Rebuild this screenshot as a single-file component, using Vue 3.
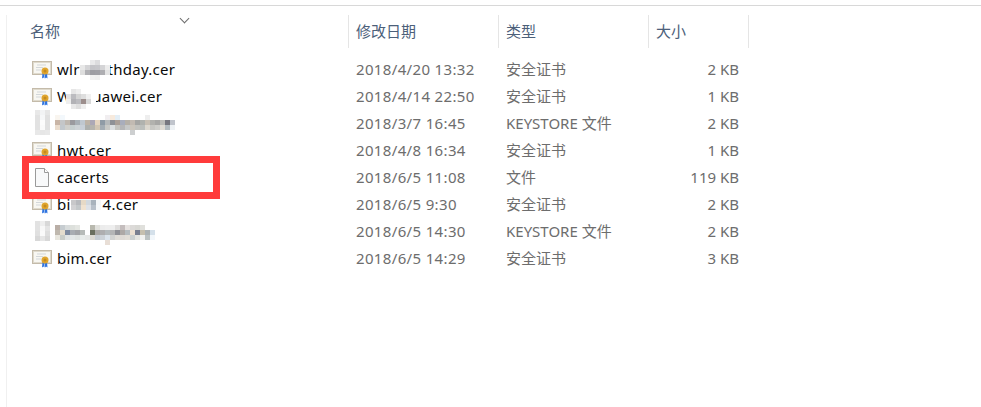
<template>
  <div class="explorer">
    <div class="list">
      <div class="list-head">
        <div class="head-cell name-col">名称<i class="sort-arrow"></i></div>
        <div class="head-cell date-col">修改日期</div>
        <div class="head-cell type-col">类型</div>
        <div class="head-cell size-col">大小</div>
      </div>

      <div v-for="file in files" :key="file.date" class="file-row">
        <div class="file-name">
          <svg v-if="file.icon === 'cert'" class="icon" width="20" height="18" viewBox="0 0 20 18">
            <rect x="0.5" y="0.5" width="19" height="13" fill="#f8f7f2" stroke="#c4bbaa" />
            <rect x="1.5" y="1.5" width="17" height="11" fill="none" stroke="#dfdacd" />
            <path d="M5 4h9M4 6.500h7M4 9h5" stroke="#d3d7da" stroke-width="1" />
            <path d="M10.500 12l-.5 5.500 1.500-1 1 1V12zM13 12v5.500l1-1 1.500 1-.5-5.500z" fill="#2f74e0" />
            <circle cx="13" cy="10" r="3.500" fill="#dfa52e" />
            <circle cx="13" cy="10" r="1.500" fill="#c48a1e" />
          </svg>
          <svg v-else-if="file.icon === 'file'" class="icon" width="20" height="19" viewBox="0 0 20 19">
            <path d="M3.500.5h9l4 4v14h-13z" fill="#f8f9fa" stroke="#9a9a9a" />
            <path d="M12.500.5v4h4" fill="#fff" stroke="#9a9a9a" />
          </svg>
          <svg v-else class="icon mosaic-icon" :width="15" :height="file.icon.length * 5" :viewBox="`0 0 15 ${file.icon.length * 5}`">
            <template v-for="(line, y) in file.icon" :key="y">
              <rect v-for="(c, x) in line" :key="x" :x="x * 5" :y="y * 5" width="5" height="5" :fill="c" />
            </template>
          </svg>

          <template v-for="(part, i) in file.name" :key="i">
            <span v-if="typeof part === 'string'">{{ part }}</span>
            <svg v-else class="mosaic" :class="part.cls" :width="part.rows[0].length * 5" :height="part.rows.length * 5">
              <template v-for="(line, y) in part.rows" :key="y">
                <rect v-for="(c, x) in line" :key="x" :x="x * 5" :y="y * 5" width="5" height="5" :fill="c" />
              </template>
            </svg>
          </template>
        </div>
        <div class="file-date">{{ file.date }}</div>
        <div class="file-type">{{ file.type }}</div>
        <div class="file-size">{{ file.size }}</div>
      </div>
    </div>

    <div class="red-mark"></div>
  </div>
</template>

<script setup>
const w = '#ffffff'

const keyIcon1 = [
  ['#e8e8e8', '#f2f3f4', '#e6e6e6'],
  ['#e2e2e2', '#f6f7f8', '#e0e0e0'],
  ['#e2e2e2', '#fcfcfc', '#e0e0e0'],
  ['#e2e2e2', '#fafafa', '#e0e0e0'],
  ['#e8e8e8', '#e6e6e6', '#e8e8e8']
]
const keyIcon2 = [
  ['#e2e2e2', '#eeeeee', '#d8d8d8'],
  ['#e2e2e2', '#f8f8f8', '#e4e4e4'],
  ['#e0e0e0', '#fafafa', '#dedede'],
  ['#d8d8d8', '#e6e6e6', '#d8d8d8']
]

const keyName1 = [
  ['#f9f5ef', '#f3f8fc', w, w, w, w, w, w, w, w, '#f1eef0', '#f7eadd', '#e3eef6', w, w, w, w, w, '#eeeeee', w, w, w, w, w],
  ['#c9b5a6', '#c4c6c8', '#bfb8b0', '#9a9a9e', '#a8b0b6', '#bfc7d0', '#bdb3a8', '#aca8b6', '#e6d5c0', '#8f9ba6', '#b5b9bb', '#8f9096', '#ab9f98', '#a8adbc', '#b5b0a8', '#c2bab2', '#a6a6a4', '#b0b2ae', '#c8c0b4', '#b2b2ae', '#a8a8a6', '#bcbcb8', '#77777f', '#c0c4cc'],
  ['#eadccd', '#c2c8cd', '#d0d0cc', '#c6cfcf', '#cdd3d6', '#c8cfd8', '#aeb0ae', '#b6b4ae', '#d2c6b4', '#a4adb4', '#c8c9c6', '#dcdee0', '#c6c4c0', '#b5b6b8', '#c6c8c8', '#cbc5bc', '#c2c2be', '#bcbfbc', '#dcd8cf', '#c8c8c4', '#cfcfcb', '#e0dcd4', '#b4bcc0', '#eef2f5'],
  [w, w, w, w, w, w, w, w, w, w, w, w, w, w, w, '#cdcfd0', w, w, w, w, w, w, w, w]
]
const keyName2 = [
  ['#b9aea6', '#c6ccd0', '#d8dcdc', '#dde0dc', '#e4e6e2', w, w, '#b8b8ae', '#e0e0dc', '#ececec', '#eeeeee', '#eeeeee', '#dedddc', '#c4bdbd', '#e6e2e0', '#dcdad8', '#d8d8d4', '#e0e0dc', w, w],
  ['#bfb8ae', '#e3dccd', '#7e8ba0', '#a9adb2', '#a3a5a8', '#b7bbb8', w, '#6a6e5e', '#aaa8a5', '#aeaeb0', '#b4babd', '#b4b4b6', '#8f8f96', '#ada8a6', '#b6bcc0', '#ece0d2', '#7a7f90', '#c6bfae', '#acb2b4', '#d4e0ea'],
  ['#e8e6de', '#c9cdc8', '#dfe3e3', '#e4e8e8', '#e0e4e2', '#e8ecea', '#e6e8e6', '#dcd9d2', '#c6ccd2', '#ccd2d8', '#dce4ec', '#d2d2d2', '#e0dcd8', '#dedad6', '#e2ded8', '#ccd0d0', '#e4e4e0', '#f2f2f0', '#bcc2c2', '#f2f7fb'],
  [w, w, w, w, w, w, w, w, w, w, '#e8ded6', w, w, w, w, w, w, w, w, w]
]

const wlMosaic = [
  [w, w, '#e9e9ea', '#dcdcde', w, w],
  ['#e8e8e8', '#d4d4d6', '#c4c4c8', '#c6c6ca', '#d4d4d6', '#ececec'],
  ['#dedede', '#b0b0b4', '#9c9ca2', '#9e9ea4', '#aeaeb2', '#e4e4e4'],
  [w, w, '#f0f0f0', '#eeeeee', w, w]
]
const weMosaic = [
  [w, '#e6e6e6', '#eeeeee', w, w, w],
  ['#e2e2e2', '#bcbcc0', '#d4d4d4', '#dedede', '#f0f0f0', w],
  ['#eeeeee', '#b2b2b6', '#bcbcc0', '#9c8e8c', '#d8d8d8', w],
  [w, '#e8e8e8', '#dedede', '#eeeeee', w, w]
]
const biMosaic = [
  ['#c8c8ca', '#b8babe', '#e6d9c6', '#d2d8de', '#a8b2bc', '#f4f6f8'],
  ['#d2d2d4', '#c4c8ca', '#f0e2d0', '#dee2e8', '#b8c0ca', '#f6f8fa']
]

const files = [
  { icon: 'cert', name: ['wlr', { rows: wlMosaic, cls: 'mask-wl' }, 'thday.cer'], date: '2018/4/20 13:32', type: '安全证书', size: '2 KB' },
  { icon: 'cert', name: ['W', { rows: weMosaic, cls: 'mask-we' }, 'uawei.cer'], date: '2018/4/14 22:50', type: '安全证书', size: '1 KB' },
  { icon: keyIcon1, name: [{ rows: keyName1, cls: 'key-one' }], date: '2018/3/7 16:45', type: 'KEYSTORE 文件', size: '2 KB' },
  { icon: 'cert', name: ['hwt.cer'], date: '2018/4/8 16:34', type: '安全证书', size: '1 KB' },
  { icon: 'file', name: ['cacerts'], date: '2018/6/5 11:08', type: '文件', size: '119 KB' },
  { icon: 'cert', name: ['bi', { rows: biMosaic, cls: 'mask-bi' }, '4.cer'], date: '2018/6/5 9:30', type: '安全证书', size: '2 KB' },
  { icon: keyIcon2, name: [{ rows: keyName2, cls: 'key-two' }], date: '2018/6/5 14:30', type: 'KEYSTORE 文件', size: '2 KB' },
  { icon: 'cert', name: ['bim.cer'], date: '2018/6/5 14:29', type: '安全证书', size: '3 KB' }
]
</script>

<style>
html,
body {
  margin: 0;
  background: #fff;
}
</style>

<style scoped>
.explorer {
  position: relative;
  width: 981px;
  height: 407px;
  overflow: hidden;
  box-sizing: border-box;
  padding-top: 15px;
  background: #fff;
  font-family: "Noto Sans", "Noto Sans CJK SC", sans-serif;
  font-size: 15px;
}

/* window edge along the top */
.explorer::before {
  content: "";
  position: absolute;
  left: 0;
  right: 0;
  top: 5px;
  height: 1px;
  background: #d8d8d8;
}

.list {
  margin-left: 6px;
  height: 100%;
  border-left: 1px solid #f0f0f0;
}

.list-head,
.file-row {
  display: grid;
  grid-template-columns: 342px 150px 150px 100px;
  width: 742px;
}

.list-head {
  height: 33px;
  margin-bottom: 8px;
}

.head-cell {
  position: relative;
  box-sizing: border-box;
  padding-left: 7px;
  border-right: 1px solid #e5e5e5;
  line-height: 32px;
  color: #4c607a;
}

.head-cell.name-col {
  padding-left: 23px;
}

.sort-arrow {
  position: absolute;
  left: 174px;
  top: 0;
  width: 6px;
  height: 6px;
  border-right: 1px solid #6d6d6d;
  border-bottom: 1px solid #6d6d6d;
  transform: rotate(45deg);
}

.file-row {
  height: 27px;
  line-height: 27px;
  color: #6d6d6d;
}

.file-name {
  display: flex;
  align-items: center;
  padding-left: 25px;
  color: #0a0a0a;
  letter-spacing: 0.25px;
  white-space: pre;
}

.icon {
  flex: none;
  margin-right: 5px;
}

.mosaic-icon {
  margin: -2px 5px 0 3px;
}

.mosaic {
  flex: none;
  position: relative;
  z-index: 1;
}

.mask-wl {
  margin: 1px -2px 0 0;
}

.mask-we {
  margin: 5px -4px 0 -5px;
}

.mask-bi {
  margin: 1px 2px 0 0;
}

.key-one {
  margin-top: 3px;
}

.key-two {
  margin-top: 7px;
}

.file-date,
.file-type {
  padding-left: 7px;
}

.file-date {
  letter-spacing: 0.35px;
}

.file-size {
  padding-right: 10px;
  text-align: right;
}

.red-mark {
  position: absolute;
  left: 22px;
  top: 156px;
  width: 198px;
  height: 43px;
  box-sizing: border-box;
  border: 7px solid #ff3b3b;
}
</style>
